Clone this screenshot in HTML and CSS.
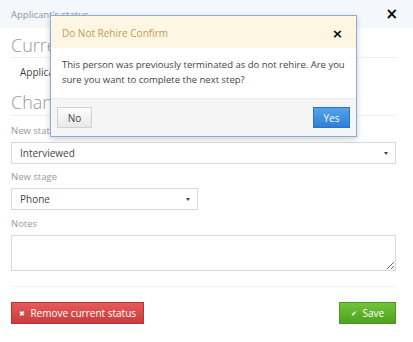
FILE: index.html
```html
<!DOCTYPE html>
<html lang="en">

<head>
    <meta charset="UTF-8">
    <meta name="viewport" content="width=device-width, initial-scale=1.0">
    <title>Applicant's status</title>
    <link rel="stylesheet" href="styles.css">
</head>

<body>

    <div class="page">
        <div class="panel-heading">
            <span>Applicant's status</span>
            <span class="close">&times;</span>
        </div>

        <div class="panel-body">
            <h3 class="first">Current status</h3>
            <div class="current-row">Applicant</div>

            <h3>Change status</h3>

            <div class="form-group">
                <label>New status</label>
                <div class="select">Interviewed <span class="caret"></span></div>
            </div>

            <div class="form-group">
                <label>New stage</label>
                <div class="select select-small">Phone <span class="caret"></span></div>
            </div>

            <div class="form-group notes-group">
                <label for="notes">Notes</label>
                <textarea id="notes"></textarea>
            </div>

            <div class="actions">
                <button class="btn btn-danger"><span class="icon">&#10006;</span> Remove current status</button>
                <button class="btn btn-success"><span class="icon">&#10004;</span> Save</button>
            </div>
        </div>

        <!-- confirm dialog over the form -->
        <div class="modal">
            <div class="modal-header">
                <span>Do Not Rehire Confirm</span>
                <span class="close">&times;</span>
            </div>
            <div class="modal-body">
                This person was previously terminated as do not rehire. Are you sure you want to complete the next step?
            </div>
            <div class="modal-footer">
                <button class="btn btn-default">No</button>
                <button class="btn btn-primary">Yes</button>
            </div>
        </div>
    </div>

</body>

</html>
```

FILE: styles.css
```css
* {
    margin: 0;
    padding: 0;
    box-sizing: border-box;
}

body {
    font-family: 'Open Sans', 'Noto Sans', sans-serif;
    font-size: 10px;
    color: #555;
    background-color: #ffffff;
}

.page {
    position: relative;
    width: 413px;
    height: 342px;
}

.panel-heading {
    height: 28px;
    display: flex;
    align-items: center;
    justify-content: space-between;
    padding: 0 15px 0 11px;
    background-color: #f4f7fb;
    color: #8a96a3;
    font-size: 9.5px;
}

.close {
    font-family: 'DejaVu Sans', sans-serif;
    font-weight: bold;
    font-size: 15px;
    color: #000;
    line-height: 1;
}

.panel-body {
    padding: 0 17px 0 11px;
}

h3 {
    height: 29px;
    font-size: 18px;
    font-weight: 300;
    color: #9a9a9a;
    line-height: 22px;
    padding-top: 4px;
    border-bottom: 1px solid #eeeeee;
}

h3.first {
    height: 30px;
    padding-top: 6px;
}

.current-row {
    height: 29px;
    line-height: 29px;
    padding-left: 9px;
    color: #444;
    font-size: 10px;
}

h3 + .form-group {
    margin-top: 7px;
}

.form-group {
    margin-top: 5px;
}

.form-group.notes-group {
    margin-top: 6px;
}

.form-group label {
    display: block;
    height: 16px;
    line-height: 16px;
    color: #999;
    font-size: 9.5px;
    margin-bottom: 3px;
}

.select {
    position: relative;
    height: 22px;
    line-height: 20px;
    border: 1px solid #d9d9d9;
    padding-left: 8px;
    color: #444;
    font-size: 10px;
    background-color: #fff;
}

.select-small {
    width: 187px;
}

.caret {
    position: absolute;
    right: 7px;
    top: 9px;
    border-left: 2px solid transparent;
    border-right: 2px solid transparent;
    border-top: 3px solid #444;
}

textarea {
    display: block;
    width: 100%;
    height: 36px;
    border: 1px solid #d9d9d9;
    font-family: inherit;
}

.actions {
    display: flex;
    justify-content: space-between;
    margin-top: 15px;
    padding-top: 15px;
    border-top: 1px solid #f3f3f3;
}

.btn {
    height: 22px;
    font-family: inherit;
    font-size: 10px;
    padding: 0;
    border: 1px solid;
    cursor: pointer;
    color: #fff;
}

.btn .icon {
    font-family: 'DejaVu Sans', sans-serif;
    font-size: 7px;
    margin-right: 3px;
    vertical-align: 1px;
}

.btn-danger {
    width: 133px;
    background: linear-gradient(#e45a5a, #cc3b3b);
    border-color: #b83434;
}

.btn-success {
    width: 57px;
    background: linear-gradient(#70c33a, #4fa21f);
    border-color: #4b991e;
}

.modal-footer .btn {
    height: 21px;
}

.btn-default {
    width: 35px;
    color: #444;
    background: linear-gradient(#fcfcfc, #e9e9e9);
    border-color: #d2d2d2;
}

.btn-primary {
    width: 37px;
    background: linear-gradient(#55a3ec, #2f7fd8);
    border-color: #2a74c8;
}

.modal {
    position: absolute;
    left: 50px;
    top: 15px;
    width: 307px;
    height: 122px;
    border: 1px solid #8eaad8;
    background-color: #fff;
    box-shadow: 0 2px 6px rgba(0, 0, 0, 0.2);
}

.modal-header {
    height: 32px;
    display: flex;
    align-items: center;
    justify-content: space-between;
    padding: 2px 13px 0 11px;
    background-color: #fcf6e3;
    color: #c49a55;
    font-size: 10px;
}

.modal-header .close {
    font-size: 13px;
}

.modal-body {
    height: 50px;
    padding: 9px 11px;
    line-height: 15px;
    color: #444;
    font-size: 9.5px;
}

.modal-footer {
    height: 38px;
    display: flex;
    align-items: center;
    justify-content: space-between;
    padding: 0 6px;
    background-color: #f5f5f5;
    border-top: 1px solid #ececec;
}
```
